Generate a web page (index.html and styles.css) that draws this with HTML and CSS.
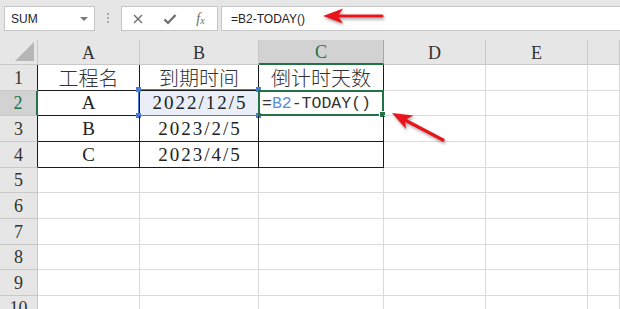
FILE: index.html
```html
<!DOCTYPE html>
<html lang="zh-CN">
<head>
    <meta charset="UTF-8">
    <title>SUM</title>
    <link rel="stylesheet" href="styles.css">
</head>
<body>
    <div class="bar">
        <div class="namebox"><span>SUM</span><span class="caret"></span></div>
        <div class="grip"><i></i><i></i><i></i></div>
        <div class="fbtns">
            <span><svg width="12" height="12" viewBox="0 0 12 12"><path d="M2 2 L10 10 M10 2 L2 10" stroke="#6b6b6b" stroke-width="1.4" fill="none"/></svg></span>
            <span><svg width="14" height="12" viewBox="0 0 14 12"><path d="M1.5 6.5 L5 10 L12.5 2" stroke="#6b6b6b" stroke-width="2.2" fill="none"/></svg></span>
            <span class="fx"><i>f</i><i class="sx">x</i></span>
        </div>
        <div class="finput">=B2-TODAY()</div>
    </div>

    <div class="sheet">
        <!-- column headers -->
        <div class="c h corner"></div>
        <div class="c h">A</div>
        <div class="c h">B</div>
        <div class="c h sel-col">C</div>
        <div class="c h">D</div>
        <div class="c h">E</div>
        <div class="c h"></div>

        <div class="c rh rt">1</div>
        <div class="c t zh">工程名</div>
        <div class="c t zh">到期时间</div>
        <div class="c t zh">倒计时天数</div>
        <div class="c"></div><div class="c"></div><div class="c"></div>

        <div class="c rh sel-row">2</div>
        <div class="c t v">A</div>
        <div class="c t v date ref">2022/12/5<span class="ref-box"><b class="k1"></b><b class="k2"></b><b class="k3"></b><b class="k4"></b></span></div>
        <div class="c t formula">=<span class="blue">B2</span>-TODAY()<span class="active-box"><b></b></span></div>
        <div class="c"></div><div class="c"></div><div class="c"></div>

        <div class="c rh rt">3</div>
        <div class="c t v">B</div>
        <div class="c t v date">2023/2/5</div>
        <div class="c t"></div>
        <div class="c"></div><div class="c"></div><div class="c"></div>

        <div class="c rh rt">4</div>
        <div class="c t v">C</div>
        <div class="c t v date">2023/4/5</div>
        <div class="c t"></div>
        <div class="c"></div><div class="c"></div><div class="c"></div>

        <div class="c rh">5</div>
        <div class="c"></div><div class="c"></div><div class="c"></div><div class="c"></div><div class="c"></div><div class="c"></div>
        <div class="c rh">6</div>
        <div class="c"></div><div class="c"></div><div class="c"></div><div class="c"></div><div class="c"></div><div class="c"></div>
        <div class="c rh">7</div>
        <div class="c"></div><div class="c"></div><div class="c"></div><div class="c"></div><div class="c"></div><div class="c"></div>
        <div class="c rh">8</div>
        <div class="c"></div><div class="c"></div><div class="c"></div><div class="c"></div><div class="c"></div><div class="c"></div>
        <div class="c rh">9</div>
        <div class="c"></div><div class="c"></div><div class="c"></div><div class="c"></div><div class="c"></div><div class="c"></div>
        <div class="c rh">10</div>
        <div class="c"></div><div class="c"></div><div class="c"></div><div class="c"></div><div class="c"></div><div class="c"></div>
    </div>

    <!-- red annotation arrows -->
    <svg class="arrows" width="620" height="309" viewBox="0 0 620 309">
        <line x1="337" y1="16" x2="382" y2="16" stroke="#e8161c" stroke-width="3.2" stroke-linecap="round"/>
        <polygon points="323,16 343,8.5 338,16 343,23.5" fill="#e8161c"/>
        <line x1="404" y1="119.5" x2="443" y2="140" stroke="#e8161c" stroke-width="3.2" stroke-linecap="round"/>
        <polygon points="392,113 413.5,115.5 405,120 406,129" fill="#e8161c"/>
    </svg>
</body>
</html>
```

FILE: styles.css
```css
body {
    margin: 0;
    width: 620px;
    height: 309px;
    overflow: hidden;
    background-color: #e6e6e6;
    font-family: "Liberation Sans", Arial, sans-serif;
    position: relative;
}

/* toolbar */
.bar {
    display: flex;
    align-items: flex-start;
    height: 40px;
    box-sizing: border-box;
    padding: 6px 0 0 4px;
}

.namebox {
    width: 91px;
    height: 25px;
    box-sizing: border-box;
    background-color: #ffffff;
    border: 1px solid #c6c6c6;
    display: flex;
    align-items: center;
    justify-content: space-between;
    padding: 0 6px 0 6px;
    font-size: 12px;
    color: #222222;
}

.caret {
    width: 0;
    height: 0;
    border-left: 4px solid transparent;
    border-right: 4px solid transparent;
    border-top: 4px solid #777777;
}

.grip {
    margin-left: 12px;
    margin-top: 7px;
    width: 3px;
    display: flex;
    flex-direction: column;
    gap: 2px;
}

.grip i {
    width: 2px;
    height: 2px;
    background-color: #a8a8a8;
}

.fbtns {
    margin-left: 11px;
    width: 97px;
    height: 25px;
    box-sizing: border-box;
    background-color: #ffffff;
    border: 1px solid #c6c6c6;
    display: grid;
    grid-template-columns: 31px 34px 27px;
    align-items: center;
    justify-items: center;
}

.fbtns span {
    display: flex;
    align-items: center;
}

.fx {
    font-family: "Liberation Serif", serif;
    font-size: 14px;
    color: #6b6b6b;
}

.fx .sx {
    font-size: 10px;
    margin-top: 4px;
}

.finput {
    margin-left: 3px;
    flex: 1;
    height: 25px;
    box-sizing: border-box;
    background-color: #ffffff;
    border: 1px solid #c6c6c6;
    border-right: none;
    padding-left: 9px;
    display: flex;
    align-items: center;
    font-size: 12px;
    color: #222222;
}

/* sheet */
.sheet {
    display: grid;
    grid-template-columns: 38px 102px 119px 125px 102px 102px 1fr;
    grid-template-rows: 25px 26px 25px 26px 26px 25px 26px 26px 25px 26px 25px;
    background-color: #ffffff;
}

.c {
    box-sizing: border-box;
    border-right: 1px solid #dadada;
    border-bottom: 1px solid #dadada;
    display: flex;
    align-items: center;
    justify-content: center;
    font-family: "Liberation Serif", serif;
    font-size: 19px;
    color: #222222;
    position: relative;
}

.h {
    background-color: #e6e6e6;
    border-right-color: #c8c8c8;
    border-bottom-color: #c8c8c8;
    font-size: 18px;
    color: #333333;
    padding-top: 2px;
}

.corner::after {
    content: "";
    position: absolute;
    right: 3px;
    bottom: 3px;
    width: 19px;
    height: 19px;
    background-color: #b6b6b6;
    clip-path: polygon(100% 0, 100% 100%, 0 100%);
}

.sel-col {
    background-color: #d2d2d2;
    color: #217346;
    border-bottom: 2px solid #217346;
    border-right-color: #a8a8a8;
}

.rh {
    background-color: #e6e6e6;
    border-right-color: #c8c8c8;
    border-bottom-color: #c8c8c8;
    font-size: 18px;
    color: #333333;
    padding-top: 1px;
}

.rt {
    border-right-color: #1a1a1a;
}

.sel-row {
    background-color: #d2d2d2;
    color: #217346;
    border-right: 2px solid #217346;
}

.t {
    border-right-color: #1a1a1a;
    border-bottom-color: #1a1a1a;
}

.zh {
    font-family: "Noto Sans CJK SC", sans-serif;
    font-size: 20px;
    font-weight: 300;
    color: #333333;
}

.date {
    letter-spacing: 2px;
    padding-left: 2px;
}

.ref {
    background-color: #e9eef8;
}

.ref-box {
    position: absolute;
    left: -2px;
    top: -2px;
    right: -1px;
    bottom: -1px;
    border: 1px solid #4a7bd1;
}

.ref-box b {
    position: absolute;
    width: 5px;
    height: 5px;
    background-color: #4a7bd1;
}

.ref-box .k1 { left: -3px; top: -3px; }
.ref-box .k2 { right: -3px; top: -3px; }
.ref-box .k3 { left: -3px; bottom: -3px; }
.ref-box .k4 { right: -3px; bottom: -3px; }

.formula {
    justify-content: flex-start;
    padding-left: 3px;
    font-family: "Liberation Mono", monospace;
    font-size: 16.5px;
    color: #333333;
}

.blue {
    color: #5b8ddb;
}

.active-box {
    position: absolute;
    left: -1px;
    top: -1px;
    right: -1px;
    bottom: -1px;
    border: 2px solid #217346;
}

.active-box b {
    position: absolute;
    right: -4px;
    bottom: -4px;
    width: 5px;
    height: 5px;
    background-color: #217346;
    border: 1px solid #ffffff;
}

.arrows {
    position: absolute;
    left: 0;
    top: 0;
    pointer-events: none;
    filter: drop-shadow(1px 2px 1.5px rgba(0, 0, 0, 0.35));
}
```
